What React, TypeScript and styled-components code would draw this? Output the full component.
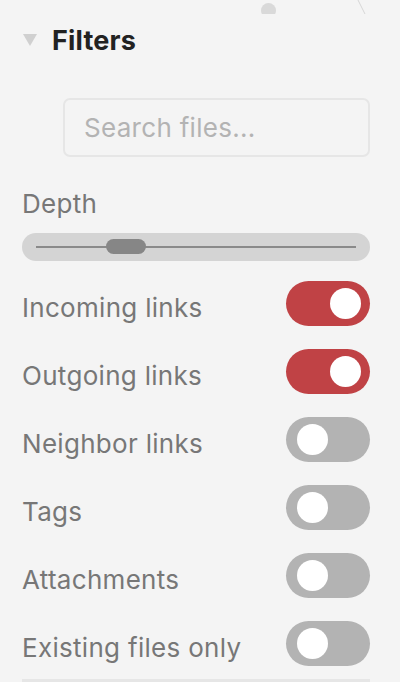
import React from 'react'
import styled, { createGlobalStyle } from 'styled-components';

const GlobalStyle = createGlobalStyle`
  html, body {
    margin: 0;
    padding: 0;
    background: #f4f4f4;
  }
  body {
    font-family: Inter, "Noto Sans", "Liberation Sans", sans-serif;
    -webkit-font-smoothing: antialiased;
  }
`;

const Panel = styled.div`
  width: 400px;
  height: 682px;
  overflow: hidden;
  background: #f4f4f4;
`;

const GraphPeek = styled.div`
  position: relative;
  height: 14px;
  overflow: hidden;
`;

const Node = styled.div`
  position: absolute;
  left: 261px;
  top: 3px;
  width: 15px;
  height: 15px;
  border-radius: 50%;
  background: #d9d9d9;
`;

const Edge = styled.svg`
  position: absolute;
  left: 355px;
  top: 0;
`;

const Body = styled.div`
  padding: 0 30px 0 22px;
  display: flex;
  flex-direction: column;
`;

const Header = styled.div`
  display: flex;
  align-items: center;
  height: 52px;
  gap: 15px;
`;

const Caret = styled.div`
  width: 0;
  height: 0;
  margin-left: 1px;
  border-left: 7px solid transparent;
  border-right: 7px solid transparent;
  border-top: 12px solid #d0d0d0;
`;

const Title = styled.h2`
  margin: 0;
  font-size: 27px;
  font-weight: 700;
  color: #222;
  letter-spacing: 0.2px;
`;

const SearchInput = styled.input`
  box-sizing: border-box;
  margin: 32px 0 0 41px;
  height: 59px;
  border: 2px solid #e6e6e6;
  border-radius: 7px;
  background: #f4f4f4;
  padding: 0 19px;
  font-family: inherit;
  font-size: 26px;
  letter-spacing: 0.3px;
  color: #333;
  outline: none;
  &::placeholder {
    color: #b3b3b3;
  }
`;

const Label = styled.span`
  font-size: 26px;
  letter-spacing: 0.3px;
  color: #777;
`;

const DepthLabel = styled(Label)`
  margin-top: 31px;
`;

const Slider = styled.div`
  margin-top: 14px;
  height: 28px;
  border-radius: 14px;
  background: #d4d4d4;
  display: flex;
  align-items: center;
  padding: 0 14px;
`;

const Track = styled.div`
  position: relative;
  flex: 1;
  height: 2px;
  background: #8a8a8a;
`;

const Thumb = styled.div<{ pos: number }>`
  position: absolute;
  top: -7px;
  left: ${({ pos }) => pos}px;
  width: 40px;
  height: 15px;
  border-radius: 8px;
  background: #868686;
`;

const List = styled.div`
  margin-top: 20px;
  display: flex;
  flex-direction: column;
  gap: 23px;
`;

const Row = styled.div`
  display: flex;
  align-items: center;
  justify-content: space-between;
  height: 45px;
`;

const RowLabel = styled(Label)`
  margin-top: 8px;
`;

const Toggle = styled.div<{ on: boolean }>`
  position: relative;
  width: 84px;
  height: 45px;
  border-radius: 23px;
  background: ${({ on }) => (on ? '#c04245' : '#b3b3b3')};
`;

const Knob = styled.div<{ on: boolean }>`
  position: absolute;
  top: 7px;
  left: ${({ on }) => (on ? '44px' : '11px')};
  width: 31px;
  height: 31px;
  border-radius: 50%;
  background: #fff;
`;

const Divider = styled.div`
  margin-top: 13px;
  height: 3px;
  background: #e6e6e6;
`;

const FILTERS: { label: string; on: boolean }[] = [
  { label: 'Incoming links', on: true },
  { label: 'Outgoing links', on: true },
  { label: 'Neighbor links', on: false },
  { label: 'Tags', on: false },
  { label: 'Attachments', on: false },
  { label: 'Existing files only', on: false },
];

const App = () => {
  return (
    <Panel>
      <GlobalStyle />
      <GraphPeek>
        <Node />
        <Edge width="14" height="14" viewBox="0 0 14 14">
          <line x1="3" y1="0" x2="10" y2="14" stroke="#d6d6d6" strokeWidth="1" />
        </Edge>
      </GraphPeek>
      <Body>
        <Header>
          <Caret />
          <Title>Filters</Title>
        </Header>
        <SearchInput placeholder="Search files..." />
        <DepthLabel>Depth</DepthLabel>
        <Slider>
          <Track>
            <Thumb pos={70} />
          </Track>
        </Slider>
        <List>
          {FILTERS.map((f) => (
            <Row key={f.label}>
              <RowLabel>{f.label}</RowLabel>
              <Toggle on={f.on}>
                <Knob on={f.on} />
              </Toggle>
            </Row>
          ))}
        </List>
        <Divider />
      </Body>
    </Panel>
  )
}

export default App
